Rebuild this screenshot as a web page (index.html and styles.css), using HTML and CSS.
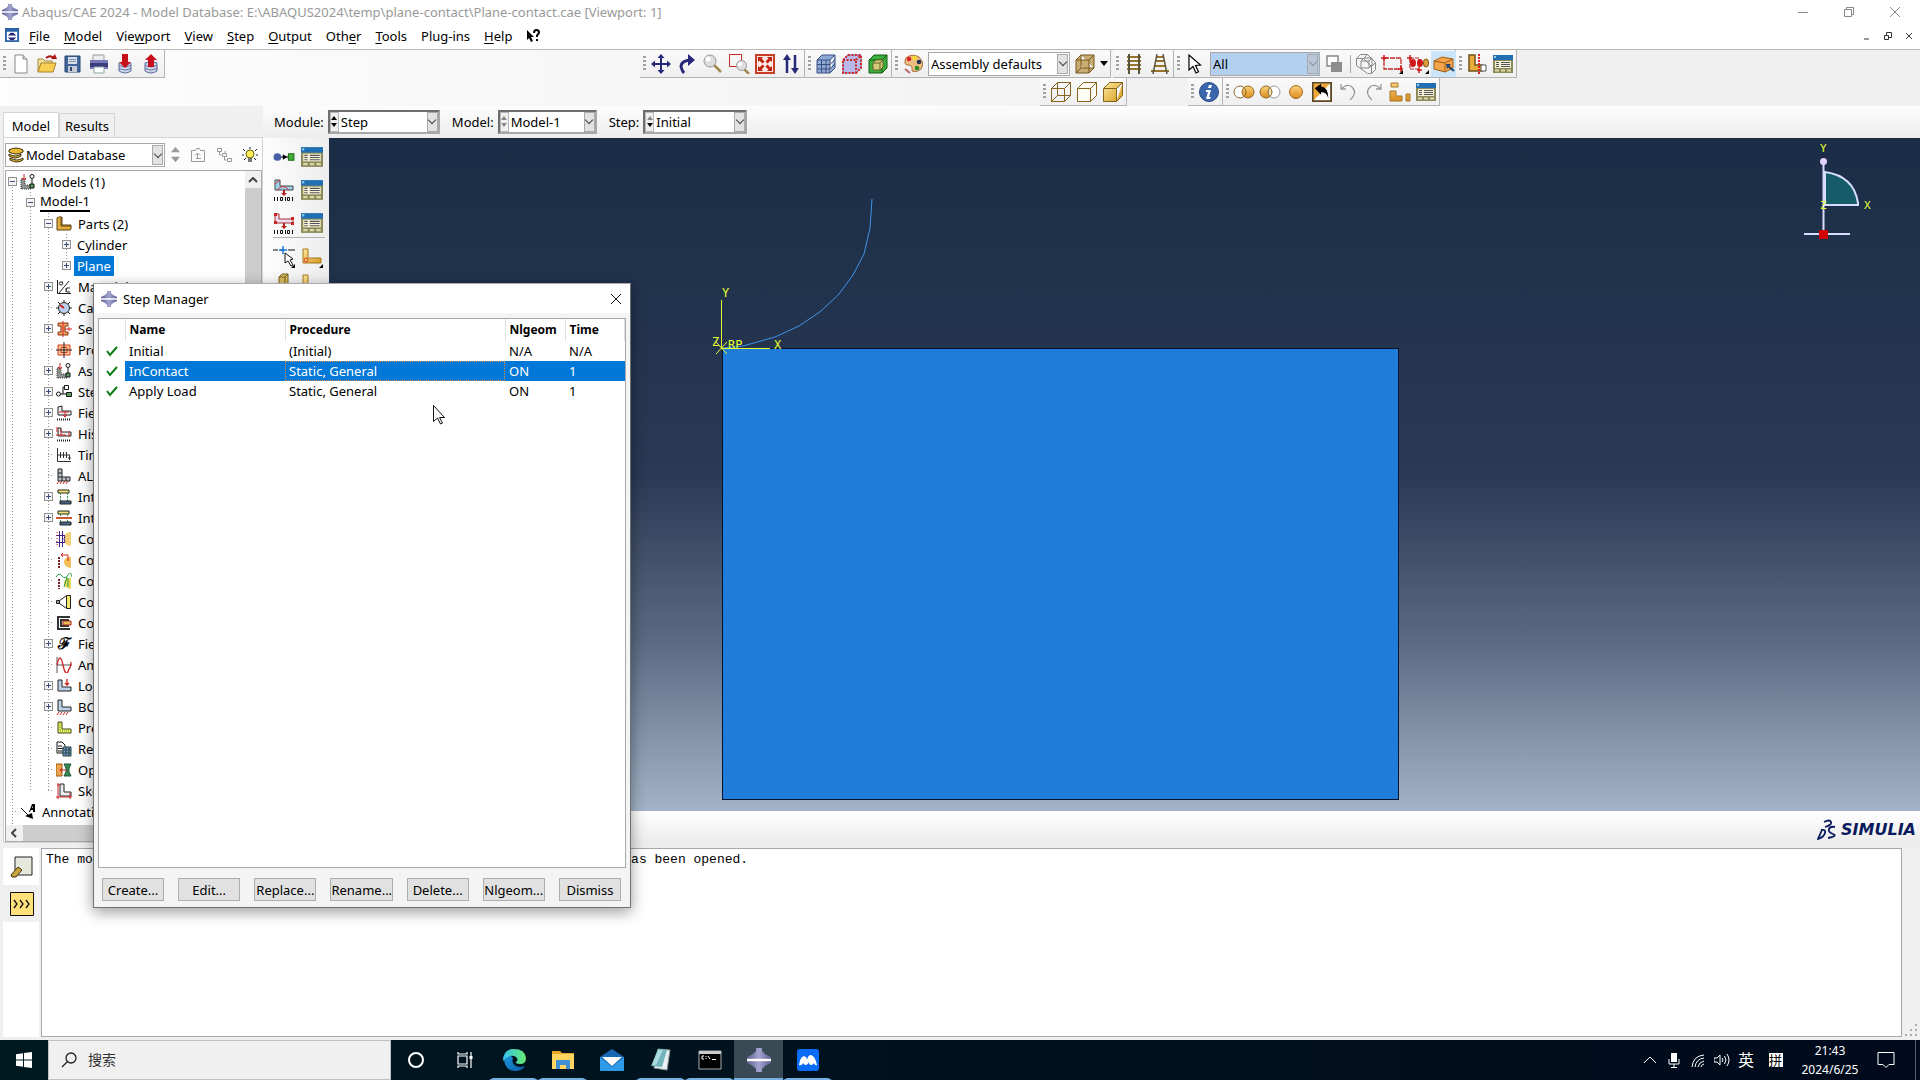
FILE: index.html
```html
<!DOCTYPE html>
<html lang="en">
  <head>
    <meta charset="UTF-8" />
    <meta name="viewport" content="width=device-width, initial-scale=1.0" />
    <title>Abaqus/CAE 2024</title>
    <link rel="stylesheet" href="styles.css">
  </head>

  <body>
    <!-- Shared icons -->
    <svg class="sprite" aria-hidden="true">
      <linearGradient id="gold" x2="1" y2="1"><stop offset="0" stop-color="#ffe9a0" /><stop offset="1" stop-color="#d49a1c" /></linearGradient>
      <linearGradient id="orange" x2="0" y2="1"><stop offset="0" stop-color="#ffd27a" /><stop offset="1" stop-color="#dc8c1e" /></linearGradient>
      <linearGradient id="purple" x2="1"><stop offset="0" stop-color="#5c5c90" /><stop offset=".5" stop-color="#a5a5d2" /><stop offset="1" stop-color="#5c5c90" /></linearGradient>
      <linearGradient id="edge" x2="1" y2="1"><stop offset="0" stop-color="#1b9de2" /><stop offset="1" stop-color="#0c59a4" /></linearGradient>
      <linearGradient id="edge2" x2="1"><stop offset="0" stop-color="#35c1f1" /><stop offset="1" stop-color="#66eb6e" /></linearGradient>

      <symbol id="abaqus" viewBox="0 0 16 16"><path d="M6 0h4v2l2 2 4 2v1.300H0V6l4-2 2-2zM0 8.700h16V10l-4 2-2 2v2H6v-2l-2-2-4-2z" fill="url(#purple)" /></symbol>
      <symbol id="manager" viewBox="0 0 20 20"><path fill="#8c8a5a" d="M0 2h20v17H0z" /><path fill="#1f6fb2" d="M0 1h20v5H0z" /><path fill="#9cd" d="M1 2h2v2H1z" /><path fill="#f4f1d8" d="M2 7h16v7H2z" /><path stroke="#555" d="M3 8.500h3m2 0h9M3 10.500h3m2 0h9M3 12.500h3m2 0h9" /><path fill="#dcd9a8" d="M2 15.500h4v2H2zm6 0h4v2H8zm6 0h4v2h-4z" /></symbol>
      <symbol id="new" viewBox="0 0 20 20"><path fill="#fff" stroke="#888" d="M4 1h8l4 4v14H4z" /><path fill="#ddd" stroke="#888" d="M12 1v4h4" /></symbol>
      <symbol id="open" viewBox="0 0 20 20"><path fill="#f3df9a" stroke="#a58a3c" d="M1 18V5h5l2 2h7v3" /><path fill="#f8cf52" stroke="#a5802c" d="M1 18l3-9h15l-3 9z" /><path fill="none" stroke="#b01818" stroke-width="2" d="M9 4q5-4 8 1" /><path fill="#b01818" d="M14 5h6l-2-5z" /></symbol>
      <symbol id="save" viewBox="0 0 20 20"><path fill="#41639b" stroke="#2b4774" d="M2 2h15v16H2z" /><path fill="#d8e1ea" d="M5 3h9v7H5z" /><path stroke="#7f93ad" d="M6 5.500h7m-7 2h7" /><path fill="#c4cbd4" d="M5 12h9v6H5z" /><path fill="#2b4774" d="M7 13h2v4H7z" /></symbol>
      <symbol id="print" viewBox="0 0 20 20"><path fill="#eee" stroke="#999" d="M4 1h11v6H4z" /><path fill="#7778b8" d="M1 6h18v9H1z" /><path fill="#3b3c7c" d="M1 9h18v4H1z" /><path fill="#fff" stroke="#8aa" d="M5 13h10v6H5z" /></symbol>
      <symbol id="db" viewBox="0 0 20 20"><path fill="#c9d4ee" stroke="#5c6d96" d="M4 9q6-3 12 0v8q-6 4-12 0zM4 11.500q6 3 12 0M4 14.500q6 3 12 0" /></symbol>
      <symbol id="dbin" viewBox="0 0 20 20"><use href="#db" /><path fill="#c8101c" d="M7 0h6v8h3l-6 6-6-6h3z" /></symbol>
      <symbol id="dbout" viewBox="0 0 20 20"><use href="#db" /><path fill="#c8101c" d="M7 13V6H4l6-6 6 6h-3v7z" /></symbol>
      <symbol id="pan" viewBox="0 0 20 20"><path stroke="#28287a" stroke-width="2" d="M10 3v14M3 10h14" /><path fill="#28287a" d="M10 0l3.500 4h-7zM10 20l3.500-4h-7zM0 10l4-3.500v7zM20 10l-4-3.500v7z" /></symbol>
      <symbol id="rotate" viewBox="0 0 20 20"><path fill="none" stroke="#28287a" stroke-width="3" d="M7 19Q-1 8 13 6" /><path fill="#28287a" d="M11 0l7 6-7 6z" /></symbol>
      <symbol id="zoom" viewBox="0 0 20 20"><path stroke="#a08a4e" stroke-width="2.500" d="M11 11l7 7" /><circle cx="7" cy="7" r="6" fill="#dedede" stroke="#999" /><circle cx="5" cy="5" r="2.500" fill="#fff" /></symbol>
      <symbol id="zoombox" viewBox="0 0 20 20"><path fill="none" stroke="#c82828" d="M.5.500h12v12H.5z" /><path stroke="#a08a4e" stroke-width="2.500" d="M15 15l5 5" /><circle cx="12.500" cy="11.500" r="5" fill="#dedede" stroke="#999" /><circle cx="11" cy="10" r="2" fill="#fff" /></symbol>
      <symbol id="fit" viewBox="0 0 20 20"><path fill="#fbe9df" stroke="#c83c28" stroke-width="2" d="M1 1h18v18H1z" /><path fill="#c02010" d="M3 3h5L6.500 4.500l3 3-2 2-3-3L3 8zM17 3h-5l1.500 1.500-3 3 2 2 3-3L17 8zM3 17h5l-1.500-1.500 3-3-2-2-3 3L3 12zM17 17h-5l1.500-1.500-3-3 2-2 3 3L17 12z" /></symbol>
      <symbol id="cycle" viewBox="0 0 20 20"><path stroke="#28287a" stroke-width="2.500" d="M6 4v15M14 1v15" /><path fill="#28287a" d="M6 0l4 6H2zM14 20l4-6h-8z" /></symbol>
      <symbol id="gridcube" viewBox="0 0 20 20"><path fill="#8fa9d4" stroke="#3a4f83" d="M1 6h13v13H1zM1 6l5-5h13l-5 5M19 1v13l-5 5M5.500 6v13M10 6v13M1 10.500h13M1 15h13M14 10.500l5-5M14 15l5-5" /></symbol>
      <symbol id="redcube" viewBox="0 0 20 20"><path fill="#b8b8ea" stroke="#7373b8" d="M1 6l5-5h13v13l-5 5H1z" /><path fill="none" stroke="#d22828" stroke-width="2" stroke-dasharray="2 1.500" d="M1 6h13v13H1zM1 6l5-5h13v13l-5 5M14 6l5-5" /></symbol>
      <symbol id="greencube" viewBox="0 0 20 20"><path fill="#3cae3c" stroke="#155c15" d="M1 6l5-5h13v13l-5 5H1zM1 6h13v13M14 6l5-5" /><path fill="#d4cb78" stroke="#67602b" d="M5 9l3-3h7v7l-3 3H5zM5 9h7v7M12 9l3-3" /></symbol>
      <symbol id="palette" viewBox="0 0 20 20"><path fill="#edbe82" stroke="#a66d38" d="M3 4q6-5 13-1 6 6 2 12-4 4-9 2 1-6-4-6-5 0-2-7z" /><circle cx="6" cy="5" r="2.300" fill="#d22" /><circle cx="11.500" cy="4" r="2.200" fill="#f6dc28" /><circle cx="16" cy="8" r="2.300" fill="#235" /><circle cx="14" cy="14" r="2.300" fill="#2a8a2a" /><path stroke="#b66" stroke-width="2" d="M2 15l5 4" /></symbol>
      <symbol id="tancube" viewBox="0 0 20 20"><path fill="#c9ac72" stroke="#76561c" d="M1 6l5-5h13v13l-5 5H1zM1 6h13v13M14 6l5-5M6 1v13h13M6 14l-5 5" /></symbol>
      <symbol id="wirecube" viewBox="0 0 20 20"><path fill="none" stroke="#86631d" d="M.5 6.500h13v13H.5zM6.500.500h13v13h-13zM.5 6.500l6-6M13.500 6.500l6-6M13.500 19.500l6-6M.5 19.500l6-6" /></symbol>
      <symbol id="hidcube" viewBox="0 0 20 20"><path fill="#fffdf6" stroke="#86631d" d="M.5 6.500h13v13H.5zM.5 6.500l6-6h13l-6 6M19.500.500v13l-6 6" /></symbol>
      <symbol id="goldcube" viewBox="0 0 20 20"><path fill="url(#gold)" stroke="#86631d" d="M.5 6.500h13v13H.5zM.5 6.500l6-6h13l-6 6M19.500.500v13l-6 6" /></symbol>
      <symbol id="ladder" viewBox="0 0 20 20"><path stroke="#96732d" stroke-width="2" d="M3 3h14M3 7h14M3 11h14M3 15h14" /><path stroke="#58563c" stroke-width="2" d="M5 0v20M15 0v20" /></symbol>
      <symbol id="ladder2" viewBox="0 0 20 20"><path stroke="#96732d" stroke-width="2" d="M6 3h8M5 7h10M4 12h12M1 17h18" /><path stroke="#58563c" stroke-width="1.500" d="M7 0L3 20M13 0l4 20" /></symbol>
      <symbol id="cursor" viewBox="0 0 20 20"><path fill="#fff" stroke="#000" stroke-width="1.200" d="M4 1v15l4-3.500 3 6.500 2.500-1.200-3-6.300 5-.5z" /></symbol>
      <symbol id="front" viewBox="0 0 20 20"><path fill="#fff" stroke="#888" stroke-width="1.500" d="M2 2h11v10H2z" /><path fill="#8c8c8c" d="M6 8h11v10H6z" /></symbol>
      <symbol id="graycube" viewBox="0 0 20 20"><path fill="#f6f6f6" stroke="#888" d="M.5 4.500l4-4h7l8 8v7l-4 4h-4l-11-8zM.5 4.500h7l8 8v7M7.500 4.500l4-4M15.500 12.500l4-4" /><path fill="none" stroke="#888" d="M5 7h8v7H5zM5 7l3-3h8v7l-3 3M13 7l3-3" /></symbol>
      <symbol id="dragbox" viewBox="0 0 22 20"><path fill="none" stroke="#c02828" stroke-width="1.300" stroke-dasharray="5 1" d="M3 4h17v11H3z" /><path stroke="#d01818" stroke-width="1.500" d="M0 4h6M3 1v6M17 15h5M20 12v6" /><path d="M18 20h4v-4z" /></symbol>
      <symbol id="dragdots" viewBox="0 0 22 20"><path fill="none" stroke="#c02828" stroke-width="1.200" stroke-dasharray="4 1" d="M3 4h9v11H3z" /><path stroke="#d01818" stroke-width="1.500" d="M0 4h5M3 1v6M10 16h5M12 14v5" /><ellipse cx="6" cy="9" rx="3" ry="4" fill="#d01818" /><ellipse cx="13" cy="9" rx="3" ry="4" fill="#d01818" /><ellipse cx="19" cy="9" rx="2.500" ry="4" fill="#e1a33c" stroke="#765014" /><path d="M18 20h4v-4z" /></symbol>
      <symbol id="boxpick" viewBox="0 0 22 20"><path fill="#f2a44c" stroke="#a25c10" d="M1 7l8-4 11 2v9l-8 4-11-3zM1 7l11 2v9M12 9l8-4" /><path stroke="#246" stroke-width="2" d="M15 12l6 5" /><path fill="#247" d="M13 10h5l-4 5z" /></symbol>
      <symbol id="lpart" viewBox="0 0 20 20"><path fill="#e8ac3c" stroke="#70501a" stroke-width="1.500" d="M2 1h6v10h7v6H2z" /><path fill="#fff" stroke="#555" d="M14 11h5v6h-5z" /><path stroke="#e02020" stroke-width="2" stroke-dasharray="2 1" d="M12 0v20" /></symbol>
      <symbol id="info" viewBox="0 0 20 20"><circle cx="10" cy="10" r="9.500" fill="#3b66ab" stroke="#274b87" /><path fill="#fff" d="M10 3h3l-1 3H9zM7 8h5l-2 7h2l-1 2H7l2-7H7z" /></symbol>
      <symbol id="vennr" viewBox="0 0 22 20"><circle cx="7" cy="10" r="6" fill="#fff" stroke="#8a6a2c" /><circle cx="15" cy="10" r="6" fill="url(#orange)" stroke="#8a6a2c" /><path fill="none" stroke="#8a6a2c" d="M11 5.500a6 6 0 010 9" /></symbol>
      <symbol id="vennl" viewBox="0 0 22 20"><circle cx="7" cy="10" r="6" fill="url(#orange)" stroke="#8a6a2c" /><circle cx="15" cy="10" r="6" fill="#fff" stroke="#999" /><path fill="#eda" stroke="#8a6a2c" d="M11 5.500a6 6 0 010 9 6 6 0 010-9" /></symbol>
      <symbol id="disc" viewBox="0 0 20 20"><circle cx="10" cy="10" r="6.500" fill="url(#orange)" stroke="#a46c1c" /></symbol>
      <symbol id="swap" viewBox="0 0 22 22"><path fill="#fff" stroke="#5c4820" stroke-width="2" d="M1 1h20v20H1z" /><path fill="#f0a638" d="M2 2h18L2 20z" /><path d="M3 7l7-5v3q8 1 8 13-2-7-8-7v3z" /></symbol>
      <symbol id="undo" viewBox="0 0 20 20"><path fill="none" stroke="#9a9a9a" stroke-width="1.300" d="M3 7q6-6 11-2 6 6-2 13M3 2v5h5" /></symbol>
      <symbol id="redo" viewBox="0 0 20 20"><path fill="none" stroke="#9a9a9a" stroke-width="1.300" d="M17 7q-6-6-11-2-6 6 2 13M17 2v5h-5" /></symbol>
      <symbol id="parts" viewBox="0 0 22 20"><path fill="url(#orange)" stroke="#a07828" d="M2 1h7v4H2zM1 9h6v5h6v5H1zM17 12h4v7h-4z" /></symbol>
      <symbol id="stacked" viewBox="0 0 16 16"><path fill="#e9ba35" stroke="#3c300e" d="M1 3q7-4 14 0v2q-7 4-14 0zM1 7q6 4 12 0v2q-6 4-12 0zM2 11q7 4 13 0v2q-6 4-13 0z" /></symbol>
      <symbol id="bulb" viewBox="0 0 16 16"><path stroke="#222" d="M8 0v2M1 2l2 2M15 2l-2 2M0 8h2M14 8h2M2 13l2-2M14 13l-2-2" /><circle cx="8" cy="7" r="4" fill="#ffef5a" stroke="#6b6214" /><path fill="#777" d="M6 11h4v4H6z" /></symbol>
      <symbol id="folderup" viewBox="0 0 16 16"><path fill="none" stroke="#999" d="M1.500 14.500v-11h4l1-2h3l1 2h4v11zM6 11.500h5M7.500 11.500V6M5 8.500L7.500 6 10 8.500" /></symbol>
      <symbol id="chain" viewBox="0 0 16 16"><path fill="none" stroke="#999" d="M1.500 1.500h4v3h-4zM6.500 6.500h4v3h-4zM11.500 11.500h4v3h-4zM3.500 5v3h2M8.500 10v3h2M9 4v2" /></symbol>
      <symbol id="stepflow" viewBox="0 0 20 20"><path stroke="#111" d="M6 10h8" /><circle cx="4" cy="10" r="3.500" fill="#4560a8" /><path fill="#3fae33" stroke="#256a1e" d="M14 7h5v6h-5z" /><path d="M9 7.500l4 2.500-4 2.500z" /></symbol>
      <symbol id="field" viewBox="0 0 22 22"><path fill="#9bd4ee" stroke="#444" d="M2 1h5v6h13v4H2z" /><path fill="none" stroke="#d33" d="M2 5l5-4M4 11q6-7 12 0" /><path stroke="#b82020" stroke-width="2" d="M11 11v4" /><path fill="#b82020" d="M8 14h6l-3 3z" /><path fill="none" stroke="#111" d="M1.500 18v4M4.500 18v4M7.500 18.500h2v3h-2zM12.500 18v4M14.500 18.500h2v3h-2zM19.500 18v4" /></symbol>
      <symbol id="history" viewBox="0 0 22 22"><path fill="#eadcf0" stroke="#a33" d="M2 2h4v5h14v4H2z" /><path fill="#c22" d="M1 1h3v3H1zM1 9h3v3H1zM18 5h3v3h-3zM18 10h3v3h-3z" /><path stroke="#b82020" stroke-width="2" d="M11 11v4" /><path fill="#b82020" d="M8 14h6l-3 3z" /><path fill="none" stroke="#111" d="M1.500 18v4M4.500 18v4M7.500 18.500h2v3h-2zM12.500 18v4M14.500 18.500h2v3h-2zM19.500 18v4" /></symbol>
      <symbol id="datum" viewBox="0 0 22 22"><path stroke="#111" d="M0 4h5m2 0h4m4 0h7" /><path stroke="#1878d8" stroke-width="1.500" d="M10 0v8M6 4h8" /><path fill="#fff" stroke="#111" d="M12 7v10l3-2 3 5 2-1-3-5 3-1z" /><path d="M18 22h4v-4z" /></symbol>
      <symbol id="lgold" viewBox="0 0 22 22"><path fill="url(#gold)" stroke="#a5791f" d="M2 3h5v9h13v5H2z" /><circle cx="5" cy="14" r="2" fill="none" stroke="#d42" /><path d="M18 22h4v-4z" /></symbol>
      <symbol id="block" viewBox="0 0 22 22"><path fill="#d9bd62" stroke="#7a5e18" d="M6 5l3-3h6v12l-3 3H6zM6 5h6v12M12 5l3-3" /></symbol>

      <!-- tree icons -->
      <symbol id="t-model" viewBox="0 0 16 16"><path fill="#8d9490" stroke="#333" stroke-dasharray="1 1" d="M1 5h4v6h6v4H1z" /><path fill="none" stroke="#c22" d="M4 0v6M2 4l2 2 2-2" /><circle cx="12" cy="2.500" r="2" fill="#fff" stroke="#111" /><path stroke="#111" d="M12 5v5" /><path fill="#5c9c62" stroke="#111" d="M10 10h4v4h-4z" /></symbol>
      <symbol id="t-part" viewBox="0 0 16 16"><path fill="#e3ad3e" stroke="#5f420e" d="M1 2l2-1h3v8h9v4l-1 1H1z" /><path fill="none" stroke="#5f420e" d="M5 2v8h10" /></symbol>
      <symbol id="t-mat" viewBox="0 0 16 16"><path fill="none" stroke="#222" d="M1.500 1v13.500H15M3 14L13 2M7 3H4q-2 3 1 3t1-3M14 9h-3q-3 1 0 2-3 1 0 2h3" /></symbol>
      <symbol id="t-cal" viewBox="0 0 16 16"><path stroke="#222" d="M8 0v16M0 8h16M2 2l12 12M14 2L2 14" /><circle cx="8" cy="8" r="5.500" fill="#b9cdec" stroke="#222" /><path stroke="#c22" stroke-width="2" d="M4 5l4 3" /></symbol>
      <symbol id="t-sec" viewBox="0 0 16 16"><path fill="#f2a465" stroke="#853710" d="M2 2h10v3H9v6h3v3H2v-3h3V5H2z" /><path stroke="#d22" d="M7 0v16M9 8h7M13 6v4" /></symbol>
      <symbol id="t-prof" viewBox="0 0 16 16"><path fill="#ffc89b" stroke="#d43a1c" d="M2 3h12v10H2zM5 5.500h6v5H5z" /><path stroke="#222" d="M8 0v16M0 8h16" /></symbol>
      <symbol id="t-step" viewBox="0 0 16 16"><path fill="none" stroke="#111" d="M4 10h6M7 10V3h2" /><circle cx="2.500" cy="10" r="2" fill="#fff" stroke="#111" /><path fill="#fff" stroke="#111" d="M8.500 1.500h4v4h-4z" /><path fill="#5c9c62" stroke="#111" d="M10.500 8.500h5v4h-5z" /></symbol>
      <symbol id="t-field" viewBox="0 0 16 16"><path fill="#eee" stroke="#222" d="M2 2l4-1v5h9v4H2z" /><path fill="none" stroke="#c22" d="M3 7h10M9 7v5M7 10l2 2 2-2" /><path stroke="#222" stroke-dasharray="1 1" stroke-width="2" d="M1 14.500h14" /></symbol>
      <symbol id="t-hist" viewBox="0 0 16 16"><path fill="#eee" stroke="#222" d="M2 2h3v4h10v4H2z" /><path stroke="#c22" d="M1 1v5M5 3v6M0 9h10M13 5v6" /><path stroke="#222" stroke-dasharray="1 1" stroke-width="2" d="M1 14.500h14" /></symbol>
      <symbol id="t-time" viewBox="0 0 16 16"><path fill="none" stroke="#333" d="M1.500 1v13.500H15M1 8h13M4.500 5v6M7.500 5v6M10.500 5v6M13.500 8v5M12 11h3" /></symbol>
      <symbol id="t-ale" viewBox="0 0 16 16"><path fill="#b9c0c8" stroke="#222" d="M2 1h4v8h8v4H2zM2 5h4M6 9v4M10 9v4M2 9h4" /><path stroke="#c22" d="M1 16l2-3M4 16l2-3M7 16l2-3M10 16l2-3" /></symbol>
      <symbol id="t-int" viewBox="0 0 16 16"><path fill="#f5e673" stroke="#222" d="M2 1h11v3H2z" /><path stroke="#2a9a4a" stroke-dasharray="2 1" d="M4.500 4v9M11.500 4v9" /><path fill="#49658d" stroke="#222" d="M4 12h11v3H4z" /></symbol>
      <symbol id="t-prop" viewBox="0 0 16 16"><use href="#t-int" /><path stroke="#c65a3a" stroke-width="2" d="M0 8h16" /></symbol>
      <symbol id="t-ctrl" viewBox="0 0 16 16"><path fill="#f5cd73" d="M15 1q-7 0-7 7t7 7z" /><path fill="none" stroke="#44208a" d="M3.500 0v16M6.500 0v16M0 4.500h9M0 11.500h9M9 5q-2 3 0 6" /><path stroke="#c22" stroke-dasharray="1 2" d="M1 1v15" /></symbol>
      <symbol id="t-init" viewBox="0 0 16 16"><path fill="#f5bd53" d="M15 5q-7 0-7 5t7 6z" /><path fill="none" stroke="#c22" d="M5 3h7v6M7 1L5 3l2 2" /><path stroke="#722" stroke-dasharray="2 1" stroke-width="2" d="M3 5v11" /></symbol>
      <symbol id="t-stab" viewBox="0 0 16 16"><path fill="#ecd953" d="M15 5q-7 0-7 5t7 6z" /><path fill="none" stroke="#289a48" d="M0 4q3-5 6-1t6-1 4 2M11 4L8 14M12 5v9" /><path stroke="#722" stroke-dasharray="2 1" stroke-width="2" d="M3 6v10" /></symbol>
      <symbol id="t-cons" viewBox="0 0 16 16"><path fill="#f4e86b" stroke="#222" d="M10.500 1.500h4v13h-4z" /><path fill="none" stroke="#222" d="M10 2L3 7v2l7 5" /><path fill="#999" stroke="#222" d="M.5 6.500h3v3h-3z" /></symbol>
      <symbol id="t-conn" viewBox="0 0 16 16"><path fill="none" stroke="#333" stroke-width="2" d="M14 2H2v12h12M13 5H5v6h8" /><path fill="#e5bf58" stroke="#a22" d="M7 6h8v4H7z" /></symbol>
      <symbol id="t-amp" viewBox="0 0 16 16"><path stroke="#555" d="M1 0v16M1 8h15" /><path fill="none" stroke="#c22" stroke-width="1.300" d="M1 8q3-14 6 0t6 4q2-2 2-7" /></symbol>
      <symbol id="t-load" viewBox="0 0 16 16"><path fill="#bcd0e8" stroke="#222" d="M2 2h4v7h9v4H2z" /><path fill="none" stroke="#c22" stroke-width="1.300" d="M11 1v6M9 5l2 2 2-2" /></symbol>
      <symbol id="t-bc" viewBox="0 0 16 16"><path fill="#bcd0e8" stroke="#222" d="M2 1h4v7h9v4H2z" /><path stroke="#c22" d="M1 16l2-3M4 16l2-3M7 16l2-3M10 16l2-3" /></symbol>
      <symbol id="t-pre" viewBox="0 0 16 16"><path fill="#eaf36a" stroke="#454514" d="M2 2h4v7h9v4H2z" /><path fill="none" stroke="#5a9c2c" stroke-dasharray="1 1" d="M4 3v8h10" /></symbol>
      <symbol id="t-mesh" viewBox="0 0 16 16"><path fill="#fff" stroke="#111" d="M1 1h5l3 3v8H1z" /><path stroke="#111" d="M2 5h4M2 7.500h5M2 10h5" /><path fill="#7b97c9" stroke="#244" d="M7 6h8v9H7zM10 6v9M13 6v9M7 9h8M7 12h8" /></symbol>
      <symbol id="t-opt" viewBox="0 0 16 16"><path fill="#eda34c" stroke="#9b5b14" d="M0 2h6v12H0z" /><path fill="#3a8754" stroke="#1d5432" d="M8 2h7l-2 4v4l2 4H8l2-4V6z" /><path fill="none" stroke="#c22" d="M4 8h7M6 6L4 8l2 2" /></symbol>
      <symbol id="t-sk" viewBox="0 0 16 16"><path fill="#eee" stroke="#222" d="M4 1h4v8h7v4H4z" /><path stroke="#c22" d="M2 0v16M0 14h16M1 2h3M14 10v6" /></symbol>
      <symbol id="t-ann" viewBox="0 0 16 16"><path stroke="#111" d="M1 4l9 9" /><path d="M5 12l8 3-1-6zM9 8l3-8h3v8h-2V6h-2l-1 2zm3-4h1V2z" /></symbol>
    </svg>

    <header class="titlebar">
      <svg class="icon16"><use href="#abaqus" /></svg>
      <span class="title-text">Abaqus/CAE 2024 - Model Database: E:\ABAQUS2024\temp\plane-contact\Plane-contact.cae [Viewport: 1]</span>
      <div class="win-controls">
        <button aria-label="Minimize"><svg viewBox="0 0 10 10"><path d="M0 5.500h10" /></svg></button>
        <button aria-label="Restore"><svg viewBox="0 0 10 10"><path d="M.5 2.500h7v7h-7zM2.500 2.500v-2h7v7h-2" /></svg></button>
        <button aria-label="Close"><svg viewBox="0 0 10 10"><path d="M0 0l10 10M10 0L0 10" /></svg></button>
      </div>
    </header>

    <nav class="menubar">
      <svg class="doc-icon" viewBox="0 0 16 16"><path fill="#fff" stroke="#2b62a8" stroke-width="2" d="M1 1h13v13H1z" /><path fill="#2b62a8" d="M1 1h13v3H1z" /><path fill="#28287a" d="M6 5h3l3 3H3zM3 10h9l-3 3H6z" /></svg>
      <button><u>F</u>ile</button>
      <button><u>M</u>odel</button>
      <button>Vie<u>w</u>port</button>
      <button><u>V</u>iew</button>
      <button><u>S</u>tep</button>
      <button><u>O</u>utput</button>
      <button>Oth<u>e</u>r</button>
      <button><u>T</u>ools</button>
      <button>Plug-ins</button>
      <button><u>H</u>elp</button>
      <button class="whats" aria-label="What's this"><svg viewBox="0 0 14 14"><path d="M1 1v10l2-2 2 4 2-1-2-4h3z" /><path fill="none" stroke="#000" stroke-width="2" d="M8 4q0-3 2.500-3t2.500 2.500q0 1-2 3V8M11 10v2" /></svg></button>
      <div class="mdi-controls">
        <button aria-label="Minimize viewport"><svg viewBox="0 0 8 8"><path d="M1 7h5" /></svg></button>
        <button aria-label="Restore viewport"><svg viewBox="0 0 8 8"><path d="M.5 3.500h4v4h-4zM2.500 3V.500h5v5H5" /></svg></button>
        <button aria-label="Close viewport"><svg viewBox="0 0 8 8"><path d="M1 1l6 6M7 1L1 7" /></svg></button>
      </div>
    </nav>

    <div class="toolbars">
      <div class="tool-row">
        <div class="group file-group">
          <i class="grip"></i>
          <button aria-label="New"><svg><use href="#new" /></svg></button>
          <button aria-label="Open"><svg><use href="#open" /></svg></button>
          <button aria-label="Save"><svg><use href="#save" /></svg></button>
          <button aria-label="Print"><svg><use href="#print" /></svg></button>
          <button aria-label="Import"><svg><use href="#dbin" /></svg></button>
          <button aria-label="Export"><svg><use href="#dbout" /></svg></button>
        </div>
        <div class="group view-group">
          <i class="grip"></i>
          <button aria-label="Pan"><svg><use href="#pan" /></svg></button>
          <button aria-label="Rotate"><svg><use href="#rotate" /></svg></button>
          <button aria-label="Magnify"><svg><use href="#zoom" /></svg></button>
          <button aria-label="Box zoom"><svg><use href="#zoombox" /></svg></button>
          <button aria-label="Auto-fit"><svg><use href="#fit" /></svg></button>
          <button aria-label="Cycle"><svg><use href="#cycle" /></svg></button>
        </div>
        <div class="group">
          <i class="grip"></i>
          <button aria-label="Mesh display"><svg><use href="#gridcube" /></svg></button>
          <button aria-label="Seeds display"><svg><use href="#redcube" /></svg></button>
          <button aria-label="Reference display"><svg><use href="#greencube" /></svg></button>
        </div>
        <div class="group">
          <i class="grip"></i>
          <button aria-label="Color code"><svg><use href="#palette" /></svg></button>
          <div class="combo color-combo">
            <select aria-label="Color mapping"><option>Assembly defaults</option></select>
            <span class="drop"></span>
          </div>
          <button aria-label="Translucency"><svg><use href="#tancube" /></svg></button>
          <button class="more" aria-label="More"></button>
        </div>
        <div class="group rail-group">
          <i class="grip"></i>
          <button aria-label="Perspective off"><svg><use href="#ladder" /></svg></button>
          <button aria-label="Perspective on"><svg><use href="#ladder2" /></svg></button>
        </div>
        <div class="group select-group">
          <i class="grip"></i>
          <button aria-label="Select"><svg><use href="#cursor" /></svg></button>
          <div class="combo filter-combo">
            <select aria-label="Selection filter"><option>All</option></select>
            <span class="drop"></span>
          </div>
          <button aria-label="Front"><svg><use href="#front" /></svg></button>
          <i class="sep"></i>
          <button aria-label="Entities"><svg><use href="#graycube" /></svg></button>
          <button aria-label="Drag shape"><svg><use href="#dragbox" /></svg></button>
          <button aria-label="Drag scope"><svg><use href="#dragdots" /></svg></button>
          <button class="on" aria-label="Highlight"><svg><use href="#boxpick" /></svg></button>
        </div>
        <div class="group">
          <i class="grip"></i>
          <button aria-label="View cut"><svg><use href="#lpart" /></svg></button>
          <button aria-label="View cut manager"><svg><use href="#manager" /></svg></button>
        </div>
      </div>
      <div class="tool-row">
        <div class="group render-group">
          <i class="grip"></i>
          <button aria-label="Wireframe"><svg><use href="#wirecube" /></svg></button>
          <button aria-label="Hidden"><svg><use href="#hidcube" /></svg></button>
          <button aria-label="Shaded"><svg><use href="#goldcube" /></svg></button>
        </div>
        <div class="group info-group">
          <i class="grip"></i>
          <button aria-label="Query"><svg><use href="#info" /></svg></button>
        </div>
        <div class="group">
          <i class="grip"></i>
          <button aria-label="Replace"><svg><use href="#vennr" /></svg></button>
          <button aria-label="Remove"><svg><use href="#vennl" /></svg></button>
          <button aria-label="All"><svg><use href="#disc" /></svg></button>
          <button aria-label="Swap"><svg><use href="#swap" /></svg></button>
          <button aria-label="Undo"><svg><use href="#undo" /></svg></button>
          <button aria-label="Redo"><svg><use href="#redo" /></svg></button>
          <button aria-label="Display group"><svg><use href="#parts" /></svg></button>
          <button aria-label="Display group manager"><svg><use href="#manager" /></svg></button>
        </div>
      </div>
    </div>

    <main class="work">
      <aside class="browser">
        <div class="tabs">
          <button class="tab active">Model</button>
          <button class="tab">Results</button>
        </div>
        <div class="browser-body">
          <div class="browser-tools">
            <div class="combo db-combo">
              <svg class="icon16"><use href="#stacked" /></svg>
              <select aria-label="Database"><option>Model Database</option></select>
              <span class="drop"></span>
            </div>
            <svg class="updown" viewBox="0 0 10 18"><path d="M0 6l5-6 5 6zM0 11l5 6 5-6z" /></svg>
            <svg class="icon16"><use href="#folderup" /></svg>
            <svg class="icon16"><use href="#chain" /></svg>
            <svg class="icon16"><use href="#bulb" /></svg>
          </div>
          <div class="tree-box">
            <div class="tree-scroll">
              <ul class="tree">
                <li>
                  <div class="node"><i class="exp minus"></i><svg><use href="#t-model" /></svg><span>Models (1)</span></div>
                  <ul>
                    <li>
                      <div class="node"><i class="exp minus"></i><span class="current">Model-1</span></div>
                      <ul>
                        <li>
                          <div class="node"><i class="exp minus"></i><svg><use href="#t-part" /></svg><span>Parts (2)</span></div>
                          <ul>
                            <li><div class="node"><i class="exp"></i><span>Cylinder</span></div></li>
                            <li><div class="node"><i class="exp"></i><span class="selected">Plane</span></div></li>
                          </ul>
                        </li>
                        <li><div class="node"><i class="exp"></i><svg><use href="#t-mat" /></svg><span>Materials (1)</span></div></li>
                        <li><div class="node"><i class="stub"></i><svg><use href="#t-cal" /></svg><span>Calibrations</span></div></li>
                        <li><div class="node"><i class="exp"></i><svg><use href="#t-sec" /></svg><span>Sections (1)</span></div></li>
                        <li><div class="node"><i class="stub"></i><svg><use href="#t-prof" /></svg><span>Profiles</span></div></li>
                        <li><div class="node"><i class="exp"></i><svg><use href="#t-model" /></svg><span>Assembly</span></div></li>
                        <li><div class="node"><i class="exp"></i><svg><use href="#t-step" /></svg><span>Steps (3)</span></div></li>
                        <li><div class="node"><i class="exp"></i><svg><use href="#t-field" /></svg><span>Field Output Requests</span></div></li>
                        <li><div class="node"><i class="exp"></i><svg><use href="#t-hist" /></svg><span>History Output Requests</span></div></li>
                        <li><div class="node"><i class="stub"></i><svg><use href="#t-time" /></svg><span>Time Points</span></div></li>
                        <li><div class="node"><i class="stub"></i><svg><use href="#t-ale" /></svg><span>ALE Adaptive Mesh</span></div></li>
                        <li><div class="node"><i class="exp"></i><svg><use href="#t-int" /></svg><span>Interactions (1)</span></div></li>
                        <li><div class="node"><i class="exp"></i><svg><use href="#t-prop" /></svg><span>Interaction Properties</span></div></li>
                        <li><div class="node"><i class="stub"></i><svg><use href="#t-ctrl" /></svg><span>Contact Controls</span></div></li>
                        <li><div class="node"><i class="stub"></i><svg><use href="#t-init" /></svg><span>Contact Initializations</span></div></li>
                        <li><div class="node"><i class="stub"></i><svg><use href="#t-stab" /></svg><span>Contact Stabilizations</span></div></li>
                        <li><div class="node"><i class="stub"></i><svg><use href="#t-cons" /></svg><span>Constraints</span></div></li>
                        <li><div class="node"><i class="stub"></i><svg><use href="#t-conn" /></svg><span>Connector Sections</span></div></li>
                        <li><div class="node"><i class="exp"></i><b class="script-f">ℱ</b><span>Fields</span></div></li>
                        <li><div class="node"><i class="stub"></i><svg><use href="#t-amp" /></svg><span>Amplitudes</span></div></li>
                        <li><div class="node"><i class="exp"></i><svg><use href="#t-load" /></svg><span>Loads (1)</span></div></li>
                        <li><div class="node"><i class="exp"></i><svg><use href="#t-bc" /></svg><span>BCs (3)</span></div></li>
                        <li><div class="node"><i class="stub"></i><svg><use href="#t-pre" /></svg><span>Predefined Fields</span></div></li>
                        <li><div class="node"><i class="stub"></i><svg><use href="#t-mesh" /></svg><span>Remeshing Rules</span></div></li>
                        <li><div class="node"><i class="stub"></i><svg><use href="#t-opt" /></svg><span>Optimization Tasks</span></div></li>
                        <li><div class="node"><i class="stub"></i><svg><use href="#t-sk" /></svg><span>Sketches</span></div></li>
                      </ul>
                    </li>
                  </ul>
                </li>
                <li><div class="node"><i class="stub"></i><svg><use href="#t-ann" /></svg><span>Annotations</span></div></li>
              </ul>
              <div class="vscroll"><svg viewBox="0 0 10 6"><path d="M1 5l4-4 4 4" /></svg><div class="thumb"></div></div>
            </div>
            <div class="hscroll"><svg viewBox="0 0 6 10"><path d="M5 1L1 5l4 4" /></svg><div class="thumb"></div></div>
          </div>
        </div>
      </aside>

      <section class="center">
        <div class="context-bar">
          <label for="module">Module:</label>
          <div class="combo sunken module-combo">
            <span class="spin"></span>
            <select id="module"><option>Step</option></select>
            <span class="drop"></span>
          </div>
          <label for="model">Model:</label>
          <div class="combo sunken model-combo">
            <span class="spin off"></span>
            <select id="model"><option>Model-1</option></select>
            <span class="drop"></span>
          </div>
          <label for="step">Step:</label>
          <div class="combo sunken step-combo">
            <span class="spin first"></span>
            <select id="step"><option>Initial</option></select>
            <span class="drop"></span>
          </div>
        </div>
        <div class="stage">
          <div class="toolbox">
            <div class="pair"><svg><use href="#stepflow" /></svg><svg><use href="#manager" /></svg></div>
            <div class="pair"><svg><use href="#field" /></svg><svg><use href="#manager" /></svg></div>
            <div class="pair"><svg><use href="#history" /></svg><svg><use href="#manager" /></svg></div>
            <hr>
            <div class="pair small"><svg><use href="#datum" /></svg><svg><use href="#lgold" /></svg></div>
            <div class="pair small"><svg><use href="#block" /></svg><svg><use href="#lgold" /></svg></div>
          </div>
          <div class="canvas-col">
            <svg class="canvas">
              <rect x="393.500" y="210.500" width="676" height="451" fill="#1f7dd9" stroke="#04122c" />
              <path d="M393 210L414 208 446 199 470 188 492 173 510 156 524 137 535 116 541 90 543 61" fill="none" stroke="#3f94ea" />
              <g class="axis">
                <path d="M392.500 162v49M392 210.500h49M387 216l11-12M387 204l11 12" />
                <text x="393" y="159">Y</text>
                <text x="445" y="211">X</text>
                <text x="383" y="208">Z</text>
                <text x="399" y="211">RP</text>
              </g>
              <!-- view triad, kept at the right edge -->
              <svg x="100%" overflow="visible">
                <path d="M-95 34q29 4 33 31v2h-33z" fill="#155c68" stroke="#d8dcff" stroke-width="2" />
                <path d="M-96.500 24v73M-116 96h46" stroke="#d8dcff" stroke-width="2" />
                <circle cx="-96.500" cy="23.500" r="3.500" fill="#e2d2ff" />
                <rect x="-101" y="92" width="9" height="9" fill="#d00000" />
                <g class="axis small">
                  <text x="-100" y="14">Y</text>
                  <text x="-56" y="71">X</text>
                  <text x="-100" y="71">Z</text>
                </g>
              </svg>
            </svg>
            <div class="brand">
              <svg viewBox="0 0 20 22"><path fill="none" stroke="#0a1a5c" stroke-width="1.800" d="M7 3q6-3 7 0t-6 5M4 11q5-1 4 3t-7 6l4-9M18 8q-5-1-6 2t4 5-5 4" /></svg>
              <span>SIMULIA</span>
            </div>
          </div>
        </div>
      </section>
    </main>

    <section class="messages">
      <div class="message-tabs">
        <button class="active" aria-label="Messages"><svg viewBox="0 0 24 24"><path fill="#e5e8dc" stroke="#222" d="M5 2h17v18H5z" /><path fill="#c9a540" stroke="#3d3008" d="M1 20l7-8 4 3-6 7H2z" /></svg></button>
        <button aria-label="Command line"><svg viewBox="0 0 24 24"><path fill="#ffe07a" stroke="#111" d="M.5.500h23v23H.5z" /><path fill="none" stroke="#111" stroke-width="1.300" d="M4 8l3 4-3 4M10 8l3 4-3 4M16 8l3 4-3 4" /></svg></button>
      </div>
      <pre class="log">The model database "E:\ABAQUS2024\temp\plane-contact\Plane-contact.cae"   has been opened.</pre>
      <svg class="size-grip" viewBox="0 0 14 14"><path d="M11 1h2v2h-2zM11 6h2v2h-2zM6 6h2v2H6zM11 11h2v2h-2zM6 11h2v2H6zM1 11h2v2H1z" /></svg>
    </section>

    <footer class="taskbar">
      <button class="start" aria-label="Start"><svg viewBox="0 0 16 16"><path fill="#fff" d="M0 2.200l7-1v6.300H0zM8 1l8-1v7.500H8zM0 8.500h7v6.300l-7-1zM8 8.500h8V16l-8-1.100z" /></svg></button>
      <label class="search">
        <svg viewBox="0 0 16 16"><circle cx="10" cy="6" r="5" /><path d="M6.500 9.500L1 15" /></svg>
        <input type="text" value="搜索" aria-label="搜索">
      </label>
      <div class="apps">
        <button aria-label="Cortana"><svg viewBox="0 0 24 24"><circle cx="12" cy="12" r="7" fill="none" stroke="#fff" stroke-width="2" /></svg></button>
        <button aria-label="Task view"><svg viewBox="0 0 24 24"><path fill="none" stroke="#fff" stroke-width="1.200" d="M5 8h9v8H5zM5 4v2h9V4M5 20v-2h9v2M18 4v16" /><path fill="#fff" d="M16.500 8h3v3h-3z" /></svg></button>
        <button class="open" aria-label="Edge"><svg viewBox="0 0 24 24"><path fill="url(#edge)" d="M2 9q0 15 13 14 6-1 8-5-5 2-9 0-5-3-3-8-6-7-9-1z" /><path fill="url(#edge2)" d="M1 13Q1 1 12 1q11 0 12 9 0 6-6 6-5 0-4-2 3-2 0-5-6-4-13 4z" /></svg></button>
        <button class="open" aria-label="Explorer"><svg viewBox="0 0 24 24"><path fill="#e9a825" d="M1 3h8l2 2h12v5H1z" /><path fill="#ffd560" d="M1 6h22v15H1z" /><path fill="#3e8fd6" d="M5 12h14v9h-4v-4H9v4H5z" /></svg></button>
        <button aria-label="Mail"><svg viewBox="0 0 24 24"><path fill="#1668b4" d="M0 9l12-8 12 8v14H0z" /><path fill="#fff" d="M2 9h20l-10 9z" /><path fill="#2f9be8" d="M0 9l12 10L24 9v14H0z" /></svg></button>
        <button class="open" aria-label="Notes"><svg viewBox="0 0 24 24"><path fill="#e9eef0" stroke="#8b989c" d="M9 1l12 1-3 20-13-2z" /><path fill="#72b4bd" d="M9 1l9 1-5 17-11-1z" /><path fill="#a9dbe0" d="M9 2l5 0-7 15-4 0z" /></svg></button>
        <button class="open" aria-label="Command prompt"><svg viewBox="0 0 24 24"><path fill="#000" stroke="#aaa" d="M1 3h22v18H1z" /><path fill="#ccc" d="M1 3h22v3H1z" /><path fill="none" stroke="#fff" d="M6 8H4v3h2M8 8v1M8 10v1M10 8l2 3M14 11.500h4" /></svg></button>
        <button class="focused" aria-label="Abaqus"><svg viewBox="0 0 16 16"><use href="#abaqus" /><path fill="#fff" d="M0 7.200h16v1.600H0z" /></svg></button>
        <button class="open" aria-label="Meeting"><svg viewBox="0 0 24 24"><rect x="1" y="1" width="22" height="22" rx="3" fill="#0a6cf5" /><path fill="#fff" d="M3 17q1-8 5-9 3 1 3 4 1-5 4-5 4 1 6 10-2 1-3-2-1 2-3 2-2 0-2-3-1 3-3 3t-3-2q-1 3-4 2z" /></svg></button>
      </div>
      <div class="tray">
        <svg viewBox="0 0 16 16"><path d="M2 11l6-6 6 6" /></svg>
        <svg viewBox="0 0 16 16"><path fill="#fff" stroke="none" d="M5 1h6v9H5z" /><path d="M3 7v5h10V7M8 12v3M5 15.500h6" /></svg>
        <svg viewBox="0 0 16 16"><path d="M2 15Q3 4 14 3M5 15q1-8 9-9M8 15q1-5 6-6M11 15q0-2 3-3" /></svg>
        <svg viewBox="0 0 16 16"><path d="M0 6h3l3-3v10l-3-3H0zM8 6q2 2 0 4M10.500 4q3 4 0 8M13 2q4 6 0 12" /></svg>
        <span class="lang">英</span>
        <span class="ime">拼</span>
        <div class="clock"><span>21:43</span><span>2024/6/25</span></div>
        <svg class="notify" viewBox="0 0 18 18"><path d="M1 1.500h16v12h-5l-3 3-3-3H1z" /></svg>
      </div>
    </footer>

    <!-- Step Manager window -->
    <section class="dialog">
      <header>
        <svg class="icon16"><use href="#abaqus" /></svg>
        <h1>Step Manager</h1>
        <button aria-label="Close"><svg viewBox="0 0 12 12"><path d="M1 1l10 10M11 1L1 11" /></svg></button>
      </header>
      <div class="steps">
        <table>
          <colgroup><col class="c-tick"><col class="c-name"><col class="c-proc"><col class="c-nl"><col class="c-time"></colgroup>
          <thead>
            <tr><th></th><th>Name</th><th>Procedure</th><th>Nlgeom</th><th>Time</th></tr>
          </thead>
          <tbody>
            <tr><td><svg class="tick" viewBox="0 0 12 12"><path d="M1 6l3 4 7-8" /></svg></td><td>Initial</td><td>(Initial)</td><td>N/A</td><td>N/A</td></tr>
            <tr class="picked"><td><svg class="tick" viewBox="0 0 12 12"><path d="M1 6l3 4 7-8" /></svg></td><td>InContact</td><td class="focus">Static, General</td><td>ON</td><td>1</td></tr>
            <tr><td><svg class="tick" viewBox="0 0 12 12"><path d="M1 6l3 4 7-8" /></svg></td><td>Apply Load</td><td>Static, General</td><td>ON</td><td>1</td></tr>
          </tbody>
        </table>
      </div>
      <div class="actions">
        <button>Create...</button>
        <button>Edit...</button>
        <button>Replace...</button>
        <button>Rename...</button>
        <button>Delete...</button>
        <button>Nlgeom...</button>
        <button>Dismiss</button>
      </div>
    </section>

    <svg class="pointer" viewBox="0 0 12 20"><path d="M.5.500v16l4-3.500 3 6 2-1-3-5.500h5z" /></svg>
  </body>
</html>
```

FILE: styles.css
```css
* {
  box-sizing: border-box;
}

body {
  margin: 0;
  height: 100vh;
  display: flex;
  flex-direction: column;
  overflow: hidden;
  background: #f0f0f0;
  color: #000;
  font-family: "Noto Sans", "Noto Sans CJK SC", sans-serif;
  font-size: 13px;
  line-height: 20px;
}

button,
select,
input {
  font: inherit;
  color: inherit;
  border: none;
  background: none;
  padding: 0;
  margin: 0;
}

svg {
  display: block;
  flex: none;
}

.sprite {
  position: absolute;
  width: 0;
  height: 0;
}

.icon16 {
  width: 16px;
  height: 16px;
}

/* title and menu */
.titlebar {
  display: flex;
  align-items: center;
  height: 23px;
  padding: 0 2px 0 2px;
  gap: 4px;
  background: #fff;
  color: #999;
}

.title-text {
  flex: 1;
  white-space: nowrap;
}

.win-controls {
  display: flex;
}

.win-controls button {
  width: 46px;
  height: 20px;
}

.win-controls svg {
  width: 10px;
  height: 10px;
  margin: 0 auto;
  fill: none;
  stroke: #888;
}

.menubar {
  display: flex;
  align-items: center;
  gap: 14px;
  height: 27px;
  padding: 0 7px 1px 5px;
  background: #fff;
  border-bottom: 1px solid #b8b8b8;
}

.menubar u {
  text-underline-offset: 2px;
}

.doc-icon {
  width: 15px;
  height: 15px;
  margin-right: -5px;
}

.whats svg {
  width: 14px;
  height: 14px;
}

.mdi-controls {
  display: flex;
  gap: 13px;
  margin-left: auto;
}

.mdi-controls svg {
  width: 8px;
  height: 8px;
  fill: none;
  stroke: #333;
}

/* toolbars */
.toolbars {
  background: linear-gradient(to right, #fdfdfd, #f0f0f0 70%);
}

.tool-row {
  display: flex;
  height: 28px;
}

.group {
  display: flex;
  align-items: center;
  gap: 4px;
  padding: 0 2px 0 3px;
  border-right: 1px solid #b4b4b4;
  border-bottom: 1px solid #b4b4b4;
  background: linear-gradient(#fafafa, #efefef);
}

.group button {
  width: 22px;
  height: 22px;
  display: flex;
  align-items: center;
  justify-content: center;
}

.group button svg {
  width: 22px;
  height: 20px;
}

.group button.on {
  background: #cce4f7;
  box-shadow: 0 0 0 2px #cce4f7;
}

.group button.more {
  width: 8px;
  height: 0;
  border: 4px solid transparent;
  border-top: 5px solid #000;
  border-bottom: 0;
}

.grip {
  width: 3px;
  height: 15px;
  background: repeating-linear-gradient(#a0a0a0 0 2px, transparent 2px 4px);
}

.sep {
  width: 1px;
  height: 18px;
  background: #a8a8a8;
}

.view-group {
  margin-left: 475px;
}

.file-group {
  width: 165px;
}

.rail-group {
  margin-left: 2px;
}

.select-group {
  padding-right: 0;
}

.render-group {
  margin-left: 1040px;
}

.info-group {
  margin-left: 61px;
}

/* drop-downs */
.combo {
  display: flex;
  align-items: stretch;
  height: 24px;
  border: 1px solid #a8a8a8;
  background: #fff;
}

.combo select {
  flex: 1;
  min-width: 0;
  appearance: none;
  padding-left: 2px;
}

.drop {
  width: 11px;
  margin: 1px;
  border: 1px solid #aaa;
  background: #e2e2e2;
  display: flex;
  align-items: center;
  justify-content: center;
}

.drop::before {
  content: "";
  width: 5px;
  height: 5px;
  margin-top: -3px;
  border: solid #444;
  border-width: 0 1px 1px 0;
  transform: rotate(45deg);
}

.color-combo {
  width: 142px;
}

.filter-combo {
  width: 110px;
  background: #b3d0f0;
}

.filter-combo .drop {
  background: #b9c6d6;
}

.filter-combo .drop::before {
  border-color: #8a94a0;
}

.sunken {
  border: 2px solid #a8a8a8;
  border-top-color: #6e6e6e;
  border-left-color: #6e6e6e;
}

.sunken .drop {
  margin: 0;
}

.spin {
  width: 9px;
  display: flex;
  flex-direction: column;
  justify-content: space-evenly;
  align-items: center;
  border: 1px solid #b8b8b8;
  background: #f0f0f0;
}

.spin::before,
.spin::after {
  content: "";
  border: 3px solid transparent;
}

.spin::before {
  border-top: 0;
  border-bottom: 4px solid #000;
}

.spin::after {
  border-bottom: 0;
  border-top: 4px solid #000;
}

.spin.off::before,
.spin.first::before {
  border-bottom-color: #888;
}

.spin.off::after {
  border-top-color: #888;
}

/* model browser */
.work {
  flex: 1;
  min-height: 0;
  display: flex;
}

.browser {
  width: 263px;
  display: flex;
  flex-direction: column;
  padding: 6px 0 5px 3px;
}

.tabs {
  display: flex;
  align-items: flex-end;
  height: 25px;
}

.tab {
  width: 56px;
  height: 24px;
  border: 1px solid #d4d4d4;
  border-bottom: none;
  background: #f0f0f0;
}

.tab.active {
  height: 26px;
  margin-bottom: -1px;
  background: #fff;
}

.browser-body {
  flex: 1;
  min-height: 0;
  display: flex;
  flex-direction: column;
  padding: 5px 0 0 1px;
  background: #fcfcfc;
  border: 1px solid #d4d4d4;
}

.browser-tools {
  display: flex;
  align-items: center;
  gap: 10px;
}

.db-combo {
  flex: none;
  width: 160px;
  margin-right: -4px;
  align-items: center;
  padding-left: 2px;
}

.db-combo .drop {
  height: 20px;
}

.updown {
  width: 9px;
  height: 18px;
  fill: #999;
}

.tree-box {
  flex: 1;
  min-height: 0;
  display: flex;
  flex-direction: column;
  margin-top: 3px;
  border: 1px solid #a8a8a8;
  background: #fff;
}

.tree-scroll {
  flex: 1;
  min-height: 0;
  display: flex;
  overflow: hidden;
}

.tree {
  flex: 1;
  overflow: hidden;
}

.tree,
.tree ul {
  list-style: none;
  margin: 0;
  padding: 0;
  background: repeating-linear-gradient(#999 0 1px, transparent 1px 3px) 4px 0 / 1px calc(100% - 10px) no-repeat;
}

.tree {
  margin-left: 2px;
  background-position: 4px 10px;
}

.tree ul {
  margin-left: 18px;
}

.node {
  display: flex;
  align-items: center;
  gap: 3px;
  height: 21px;
  white-space: nowrap;
}

.node svg {
  width: 16px;
  height: 16px;
}

.node span {
  padding: 0 3px;
}

.node .current {
  padding: 0;
  margin-left: 2px;
  line-height: 17px;
  border-bottom: 2px solid #000;
}

.node .selected {
  background: #0078d7;
  color: #fff;
}

.script-f {
  width: 16px;
  text-align: center;
  font-family: "DejaVu Serif", serif;
  font-size: 16px;
}

.exp {
  width: 9px;
  height: 9px;
  border: 1px solid #919191;
  background:
    linear-gradient(#3c4a78, #3c4a78) center / 5px 1px no-repeat,
    linear-gradient(#3c4a78, #3c4a78) center / 1px 5px no-repeat,
    #f4f4f4;
}

.exp.minus {
  background: linear-gradient(#3c4a78, #3c4a78) center / 5px 1px no-repeat, #f4f4f4;
}

.stub {
  width: 9px;
  height: 1px;
  background: repeating-linear-gradient(to right, #999 0 1px, transparent 1px 3px) 4px 0 no-repeat;
}

.vscroll {
  width: 16px;
  display: flex;
  flex-direction: column;
  background: #f0f0f0;
}

.vscroll svg {
  width: 10px;
  height: 6px;
  margin: 6px 3px 5px;
}

.vscroll svg,
.hscroll svg {
  fill: none;
  stroke: #444;
  stroke-width: 2;
}

.thumb {
  flex: 1;
  background: #cdcdcd;
}

.hscroll {
  height: 16px;
  display: flex;
  background: #f0f0f0;
}

.hscroll svg {
  width: 6px;
  height: 10px;
  margin: 3px 6px 3px 5px;
}

/* context bar, toolbox, viewport */
.center {
  flex: 1;
  min-width: 0;
  display: flex;
  flex-direction: column;
}

.context-bar {
  display: flex;
  align-items: center;
  height: 32px;
  padding: 0 0 1px 11px;
  background: linear-gradient(#fdfdfd, #ededed);
}

.context-bar label {
  margin-right: 4px;
}

.context-bar .combo {
  margin-right: 12px;
}

.module-combo {
  width: 112px;
}

.model-combo {
  width: 99px;
}

.step-combo {
  width: 104px;
}

.stage {
  flex: 1;
  min-height: 0;
  display: flex;
}

.toolbox {
  width: 66px;
  padding: 2px 4px 0 10px;
  overflow: hidden;
  background: linear-gradient(to right, #fdfdfd, #ededed);
}

.pair {
  display: flex;
  align-items: center;
  gap: 6px;
  height: 33px;
}

.pair svg {
  width: 22px;
  height: 22px;
}

.pair.small {
  height: 26px;
}

.toolbox hr {
  margin: -2px 0 6px;
  border: none;
  border-top: 1px solid #b0b0b0;
}

.canvas-col {
  flex: 1;
  min-width: 0;
  display: flex;
  flex-direction: column;
}

.canvas {
  flex: 1;
  width: 100%;
  min-height: 0;
  background: linear-gradient(#1b2d46, #2a3954 50%, #5c6b83 75%, #a3b3c8);
}

.axis {
  fill: none;
  stroke: #e6ff32;
}

.axis text {
  fill: #e6ff32;
  stroke: none;
  font-family: "DejaVu Sans Mono", monospace;
  font-size: 12px;
}

.axis.small text {
  font-size: 11px;
}

.brand {
  display: flex;
  align-items: center;
  justify-content: flex-end;
  gap: 4px;
  height: 37px;
  padding-right: 4px;
  background: linear-gradient(#fff, #ededed 80%);
  color: #0a1a5c;
  font-family: "DejaVu Sans", sans-serif;
  font-size: 16px;
  font-weight: bold;
  font-style: italic;
}

.brand svg {
  width: 20px;
  height: 22px;
}

/* message area */
.messages {
  display: flex;
  height: 192px;
  padding: 0 2px 3px 3px;
}

.message-tabs {
  width: 36px;
  margin-right: 2px;
  background: #fff;
}

.message-tabs button {
  display: flex;
  align-items: center;
  justify-content: center;
  width: 36px;
  height: 37px;
  padding-left: 1px;
  background: #f0f0f0;
}

.message-tabs .active {
  background: #fff;
}

.message-tabs svg {
  width: 24px;
  height: 24px;
}

.log {
  flex: 1;
  margin: 0;
  padding: 2px 4px;
  border: 1px solid #a8a8a8;
  background: #fff;
  font-family: "Liberation Mono", monospace;
  font-size: 13px;
  line-height: 18px;
}

.size-grip {
  width: 14px;
  height: 14px;
  margin-left: 2px;
  align-self: flex-end;
  fill: #aaa;
}

/* taskbar */
.taskbar {
  display: flex;
  height: 40px;
  background: linear-gradient(to right, #001820, #000a1c);
  color: #fff;
}

.start {
  width: 48px;
}

.start svg {
  width: 16px;
  height: 16px;
  margin: 0 auto;
}

.search {
  display: flex;
  align-items: center;
  gap: 11px;
  width: 343px;
  padding-left: 12px;
  border: 1px solid #c0c0c0;
  background: #f0f0f0;
  color: #333;
}

.search svg {
  width: 16px;
  height: 16px;
  fill: none;
  stroke: #222;
  stroke-width: 1.3;
}

.search input {
  flex: 1;
  font-size: 14px;
}

.apps {
  display: flex;
}

.apps button {
  display: flex;
  align-items: center;
  justify-content: center;
  width: 49px;
  border: solid transparent;
  border-width: 2px 4px 2px;
}

.apps button svg {
  width: 24px;
  height: 24px;
}

.apps .open {
  border-bottom-color: #76b0e4;
}

.apps .focused {
  border-width: 2px 0 2px;
  border-bottom-color: #76b0e4;
  background: #3a4a54;
}

.tray {
  display: flex;
  align-items: center;
  gap: 8px;
  margin-left: auto;
  margin-right: 4px;
  padding-right: 20px;
  border-right: 1px solid #55606e;
}

.tray svg {
  width: 16px;
  height: 16px;
  fill: none;
  stroke: #fff;
}

.lang {
  font-size: 16px;
}

.ime {
  width: 14px;
  height: 14px;
  margin-left: 7px;
  background: #fff;
  color: #000;
  font-size: 13px;
  line-height: 14px;
}

.clock {
  display: flex;
  flex-direction: column;
  align-items: center;
  width: 78px;
  font-size: 12px;
  line-height: 19px;
}

.tray .notify {
  width: 18px;
  height: 18px;
}

/* step manager */
.dialog {
  position: absolute;
  left: 93px;
  top: 283px;
  width: 538px;
  height: 625px;
  display: flex;
  flex-direction: column;
  padding: 0 4px 6px;
  background: #f4f4f4;
  border: 1px solid #707070;
  border-top-color: #aaa;
  box-shadow: 0 4px 14px rgba(0, 0, 0, 0.4);
}

.dialog header {
  display: flex;
  align-items: center;
  gap: 6px;
  height: 29px;
  margin: 0 -4px;
  padding: 0 8px 0 7px;
  background: #fff;
}

.dialog h1 {
  flex: 1;
  margin: 0;
  font-size: 13px;
  font-weight: normal;
}

.dialog header svg {
  stroke: #111;
  width: 12px;
  height: 12px;
}

.dialog header .icon16 {
  width: 16px;
  height: 16px;
  stroke: none;
}

.steps {
  flex: 1;
  margin-top: 5px;
  border: 1px solid #a8a8a8;
  background: #fff;
}

.steps table {
  width: 100%;
  table-layout: fixed;
  border-collapse: collapse;
}

.c-tick {
  width: 26px;
}

.c-name {
  width: 160px;
}

.c-proc {
  width: 220px;
}

.c-nl {
  width: 60px;
}

.steps th {
  height: 22px;
  padding: 0 4px;
  text-align: left;
  font-size: 12px;
  border-right: 1px solid #e0e0e0;
}

.steps td {
  height: 20px;
  padding: 0 4px;
  line-height: 18px;
}

.picked td:not(:first-child) {
  background: #0078d7;
  color: #fff;
}

.picked .focus {
  outline: 1px dotted #d89050;
  outline-offset: -1px;
}

.tick {
  width: 12px;
  height: 12px;
  margin-left: 3px;
  fill: none;
  stroke: #0a7d14;
  stroke-width: 2;
}

.actions {
  display: flex;
  gap: 14px;
  padding: 10px 5px 0 4px;
}

.actions button {
  flex: 1;
  min-width: 0;
  height: 23px;
  border: 1px solid #adadad;
  background: #e1e1e1;
  white-space: nowrap;
}

.pointer {
  position: absolute;
  left: 433px;
  top: 405px;
  width: 12px;
  height: 20px;
  fill: #fff;
  stroke: #111;
}
```
